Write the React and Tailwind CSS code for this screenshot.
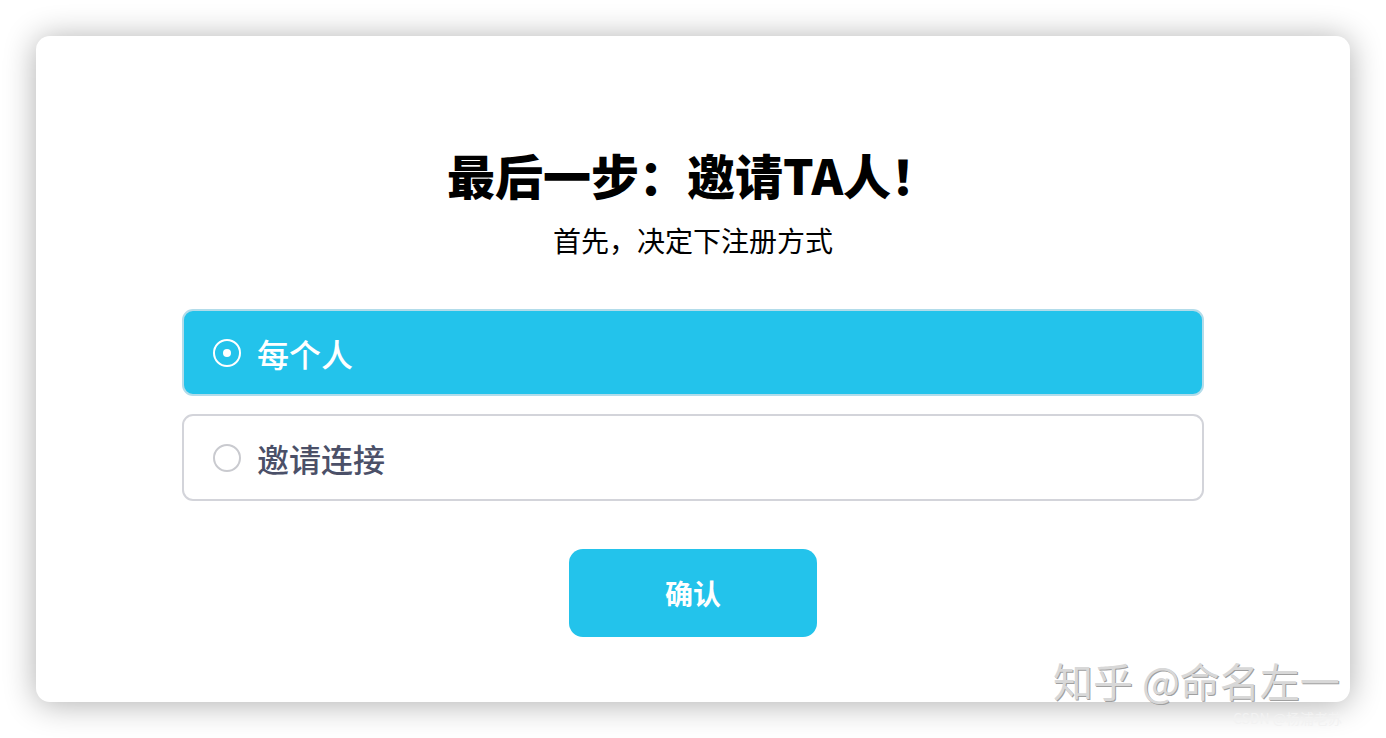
import React, { useState } from "react";

const options = [
  { id: "all", label: "每个人" },
  { id: "link", label: "邀请连接" },
];

const App = () => {
  const [selected, setSelected] = useState("all");

  return (
    <div className="relative w-[1386px] h-[738px] bg-white p-[36px] overflow-hidden font-['Noto_Sans_CJK_SC','Noto_Sans',sans-serif]">
      <div className="relative h-[666px] w-full rounded-[14px] bg-white shadow-[0_2px_32px_rgba(0,0,0,0.32)] flex flex-col items-center pt-[108px]">
        <h1 className="text-[48px] leading-[60px] font-extrabold text-black">
          最后一步：邀请TA人！
        </h1>
        <p className="mt-[18px] text-[28px] leading-[36px] text-black">
          首先，决定下注册方式
        </p>

        {/* options */}
        <div className="mt-[51px] w-[1022px] flex flex-col gap-[18px]">
          {options.map((opt) => {
            const active = selected === opt.id;
            return (
              <button
                key={opt.id}
                type="button"
                onClick={() => setSelected(opt.id)}
                className={`h-[87px] w-full rounded-[11px] border-2 flex items-center pl-[29px] text-left ${
                  active
                    ? "bg-[#23c3eb] border-[#b2dcea] text-white"
                    : "bg-white border-[#d3d4da] text-[#4b5068]"
                }`}
              >
                <span
                  className={`w-[28px] h-[28px] rounded-full border-2 flex items-center justify-center ${
                    active ? "border-white" : "border-[#c9cacf]"
                  }`}
                >
                  {active && <span className="w-[8px] h-[8px] rounded-full bg-white" />}
                </span>
                <span className="ml-[16px] text-[32px] leading-[40px] font-medium">{opt.label}</span>
              </button>
            );
          })}
        </div>

        <button
          type="button"
          className="mt-[48px] w-[248px] h-[88px] rounded-[14px] bg-[#23c3eb] text-white text-[28px] font-bold"
        >
          确认
        </button>
      </div>

      {/* watermarks */}
      <div className="absolute left-[1053px] top-[656px] text-[40px] leading-[48px] whitespace-nowrap text-[#d8d8d8] [text-shadow:1px_1px_0_#a0a0a0]">
        知乎 @命名左一
      </div>
      <div className="absolute left-[1233px] top-[708px] text-[14px] leading-[20px] whitespace-nowrap text-[#f2f2f2]">
        CSDN @杨浦老苏
      </div>
    </div>
  );
};

export default App;
